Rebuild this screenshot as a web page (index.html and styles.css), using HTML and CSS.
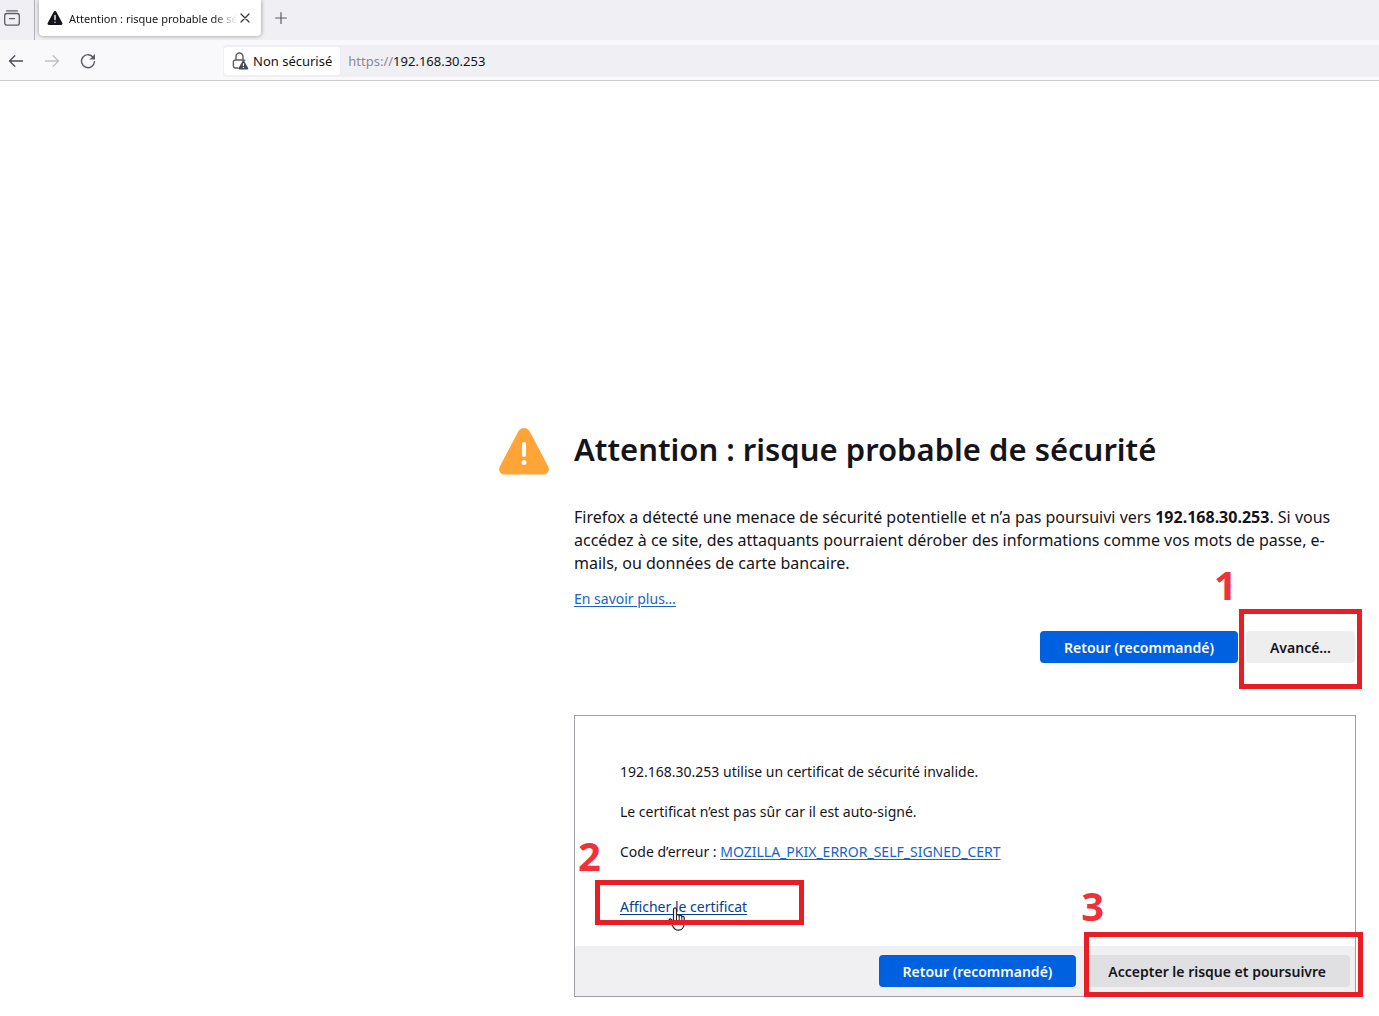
FILE: index.html
```html
<!DOCTYPE html>
<html lang="fr">
<head>
<meta charset="utf-8">
<meta name="viewport" content="width=device-width, initial-scale=1">
<title>Attention : risque probable de sécurité</title>
<link rel="stylesheet" href="styles.css">
</head>
<body>
<header class="browser">
  <div class="tab-strip">
    <button class="icon-button recent" aria-label="Onglets récents">
      <svg width="16" height="16" viewBox="0 0 16 16" fill="none" stroke="#5b5b66" stroke-width="1.3" stroke-linecap="round"><path d="M2.6 .8h10.8"/><rect x=".7" y="3.5" width="14.6" height="11.6" rx="2.2"/><path d="M5.5 8.6h5"/></svg>
    </button>
    <div class="tab">
      <svg class="tab-icon" width="16" height="16" viewBox="0 0 16 16"><path fill="#15141a" d="M8 1a1.4 1.4 0 0 0-1.3.8L.7 12.9A1.4 1.4 0 0 0 2 15h12a1.4 1.4 0 0 0 1.300-2.100L9.300 1.800A1.400 1.400 0 0 0 8 1z"/><path stroke="#fff" stroke-width="1.400" stroke-linecap="round" d="M8 5.500v4M8 12.200v.1"/></svg>
      <span class="tab-title">Attention : risque probable de sécurité</span>
      <button class="icon-button close" aria-label="Fermer l’onglet">
        <svg width="10" height="10" viewBox="0 0 10 10" stroke="#33323b" stroke-width="1.200" stroke-linecap="round"><path d="M1 1l8 8M9 1L1 9"/></svg>
      </button>
    </div>
    <button class="icon-button new-tab" aria-label="Nouvel onglet">
      <svg width="12" height="12" viewBox="0 0 12 12" stroke="#5b5b66" stroke-width="1.200" stroke-linecap="round"><path d="M6 .6v10.800M.6 6h10.800"/></svg>
    </button>
  </div>
  <div class="toolbar">
    <nav class="nav-buttons" aria-label="Navigation">
      <button class="icon-button" aria-label="Page précédente">
        <svg width="16" height="16" viewBox="0 0 16 16" fill="none" stroke="#4b4b55" stroke-width="1.300" stroke-linecap="round" stroke-linejoin="round"><path d="M14.500 8h-13M6.800 2.700L1.500 8l5.300 5.300"/></svg>
      </button>
      <button class="icon-button" aria-label="Page suivante" disabled>
        <svg width="16" height="16" viewBox="0 0 16 16" fill="none" stroke="#bfbfc6" stroke-width="1.300" stroke-linecap="round" stroke-linejoin="round"><path d="M1.500 8h13M9.200 2.700L14.500 8l-5.300 5.300"/></svg>
      </button>
      <button class="icon-button" aria-label="Actualiser">
        <svg width="16" height="16" viewBox="0 0 16 16" fill="none" stroke="#5b5b66" stroke-width="1.400" stroke-linecap="round"><path d="M13.300 4.400A6.500 6.500 0 1 0 14.500 8.500"/><path fill="#5b5b66" stroke="none" d="M15 1v5.500H9.500z"/></svg>
      </button>
    </nav>
    <div class="url-bar">
      <button class="identity">
        <svg width="17" height="18" viewBox="0 0 17 18" fill="none" stroke="#5b5b66" stroke-width="1.400"><path d="M4 8V4.500a3.500 3.500 0 0 1 7 0V8M6.500 16H3.300a1.900 1.900 0 0 1-1.900-1.900V9.900A1.900 1.900 0 0 1 3.300 8h8.400c.7 0 1.200.2 1.500.6"/><path fill="#4b4b55" stroke="none" d="M11.300 8.500a.9.900 0 0 0-.8.500l-3.900 7a.9.900 0 0 0 .8 1.400h7.900a.9.900 0 0 0 .8-1.400l-3.900-7a.9.900 0 0 0-.9-.5z"/><path stroke="#fff" stroke-width="1.100" d="M11.400 11.200v2.800M11.400 15v1.100"/></svg>
        <span>Non sécurisé</span>
      </button>
      <div class="address"><span class="scheme">https://</span>192.168.30.253</div>
    </div>
  </div>
</header>

<main class="page">
  <div class="warning">
    <svg class="warning-icon" width="50" height="47" viewBox="0 0 50 47" aria-hidden="true"><path fill="#ffa436" d="M25 0c-2.500 0-4.500 1.300-5.600 3.300L.9 38.300C-1.300 42.400 1.500 46.500 6 46.500h38c4.500 0 7.300-4.100 5.100-8.200L30.600 3.300C29.500 1.300 27.500 0 25 0z"/><path stroke="#fff" stroke-width="4" stroke-linecap="round" d="M25 16v11"/><circle cx="25" cy="34.500" r="2.500" fill="#fff"/></svg>
    <div class="content">
      <h1>Attention : risque probable de sécurité</h1>
      <p class="lead">Firefox a détecté une menace de sécurité potentielle et n’a pas poursuivi vers <b>192.168.30.253</b>. Si vous accédez à ce site, des attaquants pourraient dérober des informations comme vos mots de passe, e-mails, ou données de carte bancaire.</p>
      <p class="more"><a href="#plus">En savoir plus…</a></p>
      <div class="actions">
        <button class="button primary">Retour (recommandé)</button>
        <div class="marked">
          <button class="button">Avancé…</button>
          <span class="frame frame-advanced"></span>
          <span class="step step-advanced">1</span>
        </div>
      </div>
      <section class="details">
        <div class="details-text">
          <p>192.168.30.253 utilise un certificat de sécurité invalide.</p>
          <p>Le certificat n’est pas sûr car il est auto-signé.</p>
          <p>Code d’erreur : <a href="#code">MOZILLA_PKIX_ERROR_SELF_SIGNED_CERT</a></p>
          <div class="marked certificate">
            <a class="hovered" href="#certificat">Afficher le certificat</a>
            <svg class="cursor" width="18" height="24" viewBox="0 0 18 24"><path fill="#fff" stroke="#222" stroke-width="1.200" stroke-linejoin="round" d="M5.500 14.500V2.500C5.500.4 8.500.4 8.500 2.500v6c.3-1.200 2.700-1 2.700.5.400-1 2.600-.8 2.600.7.500-.8 2.400-.5 2.400 1v5.500c0 4-2.200 7-5.700 7-3 0-4.500-1.500-5.700-4L1.300 13.700c-.6-1.500.9-2.300 2-1.200z"/><path stroke="#222" stroke-width="1" d="M8.500 8v5M11.200 9v4M13.800 10v3"/></svg>
            <span class="frame frame-certificate"></span>
            <span class="step step-certificate">2</span>
          </div>
        </div>
        <div class="details-actions">
          <button class="button primary">Retour (recommandé)</button>
          <div class="marked">
            <button class="button">Accepter le risque et poursuivre</button>
            <span class="frame frame-accept"></span>
            <span class="step step-accept">3</span>
          </div>
        </div>
      </section>
    </div>
  </div>
</main>
</body>
</html>
```
FILE: styles.css
```css
* {
  box-sizing: border-box;
}

body {
  margin: 0;
  background: #fff;
  color: #15141a;
  font-family: "Noto Sans", "Open Sans", sans-serif;
  font-size: 14px;
}

button {
  border: 0;
  font: inherit;
  color: inherit;
}

p {
  margin: 0;
}

a {
  color: #1565c8;
  text-decoration-thickness: 1px;
  text-underline-offset: 2px;
}

.browser {
  border-bottom: 1px solid #ccc;
}

.tab-strip {
  display: flex;
  height: 40px;
  background: #f0f0f4;
}

.icon-button {
  display: grid;
  place-items: center;
  padding: 0;
  background: none;
}

.recent {
  width: 35px;
  height: 40px;
  padding: 0 11px 4px 0;
  border-right: 1px solid #aeaeb4;
}

.tab {
  display: flex;
  align-items: center;
  width: 222px;
  height: 36px;
  margin-left: 4px;
  padding: 0 8px;
  border-radius: 0 0 4px 4px;
  background: #fff;
  box-shadow: 0 0 4px rgba(0, 0, 0, 0.4);
}

.tab-icon {
  flex: none;
}

.tab-title {
  flex: 1;
  overflow: hidden;
  margin-left: 6px;
  font-size: 11px;
  white-space: nowrap;
  mask-image: linear-gradient(to left, transparent, #000 24px);
}

.close {
  width: 16px;
  height: 20px;
}

.new-tab {
  width: 40px;
  height: 36px;
}

.toolbar {
  display: flex;
  align-items: center;
  height: 40px;
  padding-top: 2px;
  background: #f9f9fb;
}

.nav-buttons {
  display: flex;
  gap: 20px;
  width: 223px;
  padding-left: 8px;
}

.url-bar {
  display: flex;
  flex: 1;
  align-items: center;
  height: 32px;
  padding: 2px 1px;
  border-radius: 4px 0 0 4px;
  background: #f0f0f4;
}

.identity {
  display: flex;
  align-items: center;
  gap: 4px;
  height: 28px;
  padding: 0 8px;
  border-radius: 3px;
  background: #fff;
  font-size: 13px;
}

.address {
  padding-left: 8px;
  font-size: 13px;
}

.scheme {
  color: #8a8a92;
}

.page {
  display: flex;
  justify-content: flex-end;
  padding: 344px 23px 19px;
}

.warning {
  display: flex;
  align-items: flex-start;
  gap: 25px;
  width: 100%;
  max-width: 857px;
}

.warning-icon {
  flex: none;
  margin-top: 3px;
}

.content {
  flex: 1;
}

h1 {
  margin: 0;
  font-size: 31px;
  font-weight: 600;
  line-height: 48px;
}

.lead {
  margin-top: 33px;
  font-size: 16px;
  line-height: 23px;
}

.more {
  margin-top: 14px;
  line-height: 20px;
}

.actions {
  display: flex;
  justify-content: flex-end;
  gap: 8px;
  margin-top: 22px;
  padding-right: 1px;
}

.button {
  height: 32px;
  padding: 0 24px;
  border-radius: 4px;
  background: rgba(21, 20, 26, 0.07);
  font-weight: 600;
  white-space: nowrap;
}

.primary {
  background: #0061e0;
  color: #fbfbfe;
}

.details {
  margin-top: 52px;
  border: 1px solid #a0a0a4;
}

.details-text {
  display: grid;
  gap: 20px;
  padding: 46px 45px 29px;
  line-height: 20px;
}

.certificate {
  justify-self: start;
  margin-top: 15px;
}

.hovered {
  color: #054096;
}

.details-actions {
  display: flex;
  justify-content: flex-end;
  gap: 8px;
  padding: 9px 5px;
  background: #f0f0f2;
}

/* Numbered tutorial marks laid over the controls */
.marked {
  position: relative;
}

.frame,
.step,
.cursor {
  position: absolute;
  pointer-events: none;
}

.frame {
  border: 5px solid #e81e26;
}

.step {
  color: #ee3239;
  font-family: "Open Sans", "Noto Sans", sans-serif;
  font-size: 40px;
  font-weight: 700;
  line-height: 40px;
}

.frame-advanced {
  inset: -22px -7px -26px;
}

.step-advanced {
  top: -66px;
  left: -32px;
}

.frame-certificate {
  top: -17px;
  left: -25px;
  width: 209px;
  height: 45px;
}

.step-certificate {
  top: -61px;
  left: -42px;
}

.cursor {
  top: 10px;
  left: 48px;
}

.frame-accept {
  inset: -23px -13px -10px 0;
}

.step-accept {
  top: -69px;
  left: -3px;
}
```
